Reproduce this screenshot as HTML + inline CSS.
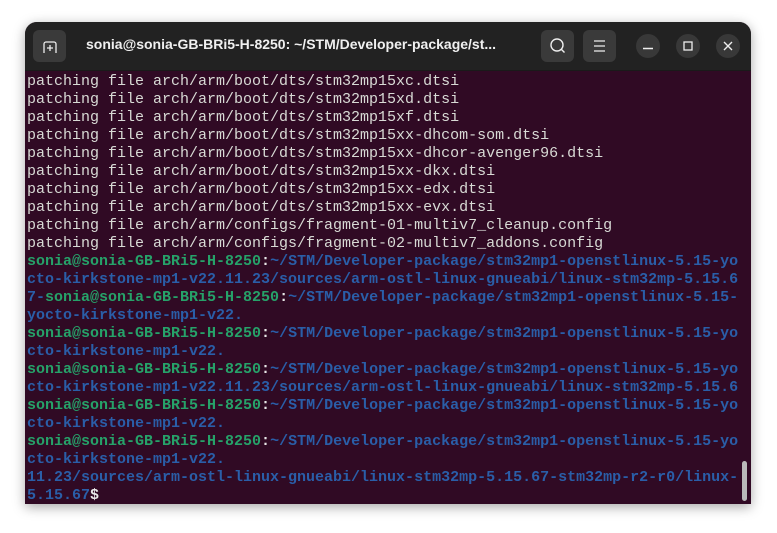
<!DOCTYPE html>
<html><head><meta charset="utf-8"><style>
html,body{margin:0;padding:0;width:777px;height:533px;background:#fff;overflow:hidden}
.win{position:absolute;left:25px;top:22px;width:726px;height:482px;border-radius:12px 12px 0 0;overflow:hidden;box-shadow:0 3px 12px rgba(0,0,0,.35);background:#300a24}
.hdr{position:absolute;left:0;top:0;width:726px;height:48px;background:#222222;border-bottom:1px solid #1a1a1a}
.title{position:absolute;left:61px;top:14px;font:bold 14px "Liberation Sans",sans-serif;color:#f0f0f0;white-space:nowrap}
.btn{position:absolute;top:8px;width:33px;height:32px;border-radius:6px;background:#3a3a3a}
.cb{position:absolute;top:12px;width:24px;height:24px;border-radius:12px;background:#383838}
.term{position:absolute;left:2px;top:51px;font:15px/18px "Liberation Mono",monospace;color:#d8dad5;white-space:pre}
.g{color:#26a269;font-weight:bold}.b{color:#2a5ea8;font-weight:bold}.w{color:#e8e8e8;font-weight:bold}
.sb{position:absolute;left:717px;top:439px;width:5px;height:40px;border-radius:3px;background:#b9b9b9}
</style></head><body>
<div class="win">
<div class="hdr">
<div class="btn" style="left:8px"><svg width="33" height="32"><path d="M11 23v-9a2 2 0 0 1 2-2h8a2 2 0 0 1 2 2v9M17 15v6M14 18h6" stroke="#eee" stroke-width="1.3" fill="none"/></svg></div>
<div class="title">sonia@sonia-GB-BRi5-H-8250: ~/STM/Developer-package/st...</div>
<div class="btn" style="left:516px"><svg width="33" height="32"><circle cx="16" cy="15" r="6" stroke="#eee" stroke-width="1.4" fill="none"/><path d="M20.5 19.5l3 3" stroke="#eee" stroke-width="1.4"/></svg></div>
<div class="btn" style="left:558px"><svg width="33" height="32"><path d="M11 11h11M11 16h11M11 21h11" stroke="#eee" stroke-width="1.3"/></svg></div>
<div class="cb" style="left:611px"><svg width="24" height="24"><path d="M7 14.5h10" stroke="#eee" stroke-width="1.4"/></svg></div>
<div class="cb" style="left:651px"><svg width="24" height="24"><rect x="8" y="8" width="8" height="8" stroke="#eee" stroke-width="1.3" fill="none"/></svg></div>
<div class="cb" style="left:691px"><svg width="24" height="24"><path d="M8 8l8 8M16 8l-8 8" stroke="#eee" stroke-width="1.4"/></svg></div>
</div>
<div class="term">patching file arch/arm/boot/dts/stm32mp15xc.dtsi
patching file arch/arm/boot/dts/stm32mp15xd.dtsi
patching file arch/arm/boot/dts/stm32mp15xf.dtsi
patching file arch/arm/boot/dts/stm32mp15xx-dhcom-som.dtsi
patching file arch/arm/boot/dts/stm32mp15xx-dhcor-avenger96.dtsi
patching file arch/arm/boot/dts/stm32mp15xx-dkx.dtsi
patching file arch/arm/boot/dts/stm32mp15xx-edx.dtsi
patching file arch/arm/boot/dts/stm32mp15xx-evx.dtsi
patching file arch/arm/configs/fragment-01-multiv7_cleanup.config
patching file arch/arm/configs/fragment-02-multiv7_addons.config
<span class="g">sonia@sonia-GB-BRi5-H-8250</span><span class="w">:</span><span class="b">~/STM/Developer-package/stm32mp1-openstlinux-5.15-yo
cto-kirkstone-mp1-v22.11.23/sources/arm-ostl-linux-gnueabi/linux-stm32mp-5.15.6
7-</span><span class="g">sonia@sonia-GB-BRi5-H-8250</span><span class="w">:</span><span class="b">~/STM/Developer-package/stm32mp1-openstlinux-5.15-
yocto-kirkstone-mp1-v22.</span>
<span class="g">sonia@sonia-GB-BRi5-H-8250</span><span class="w">:</span><span class="b">~/STM/Developer-package/stm32mp1-openstlinux-5.15-yo
cto-kirkstone-mp1-v22.</span>
<span class="g">sonia@sonia-GB-BRi5-H-8250</span><span class="w">:</span><span class="b">~/STM/Developer-package/stm32mp1-openstlinux-5.15-yo
cto-kirkstone-mp1-v22.11.23/sources/arm-ostl-linux-gnueabi/linux-stm32mp-5.15.6</span>
<span class="g">sonia@sonia-GB-BRi5-H-8250</span><span class="w">:</span><span class="b">~/STM/Developer-package/stm32mp1-openstlinux-5.15-yo
cto-kirkstone-mp1-v22.</span>
<span class="g">sonia@sonia-GB-BRi5-H-8250</span><span class="w">:</span><span class="b">~/STM/Developer-package/stm32mp1-openstlinux-5.15-yo
cto-kirkstone-mp1-v22.
11.23/sources/arm-ostl-linux-gnueabi/linux-stm32mp-5.15.67-stm32mp-r2-r0/linux-
5.15.67</span><span class="w">$</span></div>
<div class="sb"></div>
</div>
</body></html>
